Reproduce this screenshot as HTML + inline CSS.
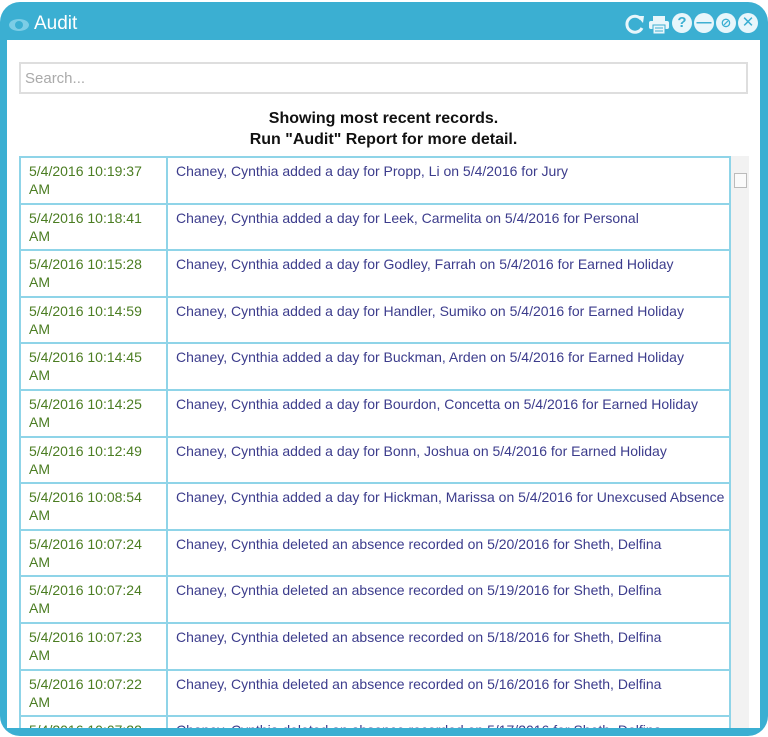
<!DOCTYPE html>
<html><head><meta charset="utf-8"><style>
*{box-sizing:border-box;margin:0;padding:0}
body{width:768px;height:737px;background:#fff;overflow:hidden;font-family:"Liberation Sans","DejaVu Sans",sans-serif;position:relative}
.win{position:absolute;left:0;top:2px;width:768px;height:734px;background:#3bafd2;border-radius:20px}
.title{position:absolute;left:34px;top:11px;color:#fff;font-size:19px;}
.eye{position:absolute;left:9px;top:17px;width:20px;height:12px;border-radius:50%;background:#7ccde6}
.eye:after{content:"";position:absolute;left:6px;top:2px;width:8px;height:8px;border-radius:50%;background:#3bafd2}
.content{position:absolute;left:7px;top:38px;width:753px;height:688px;background:#fff;overflow:hidden}
.search{position:absolute;left:12px;top:22px;width:729px;height:32px;border:2px solid #dedede;color:#aaa;font-size:15px;padding:6px 4px}
.head{position:absolute;left:0;width:753px;top:68px;text-align:center;font-weight:bold;font-size:16px;line-height:21px;color:#111}
.tbl{position:absolute;left:12px;top:116px;width:712px;height:600px;border-top:2px solid #8fd4e8;border-left:2px solid #8fd4e8;border-right:2px solid #8fd4e8}
.row{position:absolute;left:0;width:708px;height:46.6px;border-bottom:2px solid #8fd4e8;font-size:14px;line-height:18px}
.d{position:absolute;left:8px;top:4px;width:130px;color:#4b7d22}
.t{position:absolute;left:155px;top:4px;color:#3c3c8c;white-space:nowrap}
.vl{position:absolute;left:145px;top:0;width:2px;height:600px;background:#8fd4e8}
.sb{position:absolute;left:724px;top:116px;width:18px;height:572px;background:#f2f2f2}
.thumb{position:absolute;left:727px;top:133px;width:13px;height:15px;border:1px solid #bbb;background:#fafafa}
.icons{position:absolute;right:10px;top:11px;display:flex;gap:2px}
.c{width:20px;height:20px;border-radius:50%;background:#e8f6fb;color:#3bafd2;font-weight:bold;font-size:15px;text-align:center;line-height:20px}
</style></head><body>
<div class="win">
<div class="eye"></div><div class="title">Audit</div>
<div class="icons">
<svg width="22" height="22" viewBox="0 0 22 22"><path d="M17 6 A8 8 0 1 0 18 15" fill="none" stroke="#e8f6fb" stroke-width="3"/><path d="M13 3 L20 3 L19 10 Z" fill="#e8f6fb"/></svg>
<svg width="22" height="22" viewBox="0 0 22 22"><rect x="5" y="3" width="12" height="5" fill="#e8f6fb"/><rect x="1" y="8" width="20" height="8" rx="2" fill="#e8f6fb"/><rect x="5" y="12" width="12" height="9" fill="#e8f6fb" stroke="#3bafd2"/><path d="M7 15h8M7 18h8" stroke="#3bafd2"/></svg>
<div class="c">?</div><div class="c">—</div><div class="c" style="font-size:13px">⊘</div><div class="c">✕</div>
</div>
<div class="content">
<div class="search">Search...</div>
<div class="head">Showing most recent records.<br>Run "Audit" Report for more detail.</div>
<div class="tbl">
<div class="row" style="top:0"><div class="d">5/4/2016 10:19:37 AM</div><div class="t">Chaney, Cynthia added a day for Propp, Li on 5/4/2016 for Jury</div></div>
<div class="row" style="top:46.6px"><div class="d">5/4/2016 10:18:41 AM</div><div class="t">Chaney, Cynthia added a day for Leek, Carmelita on 5/4/2016 for Personal</div></div>
<div class="row" style="top:93.2px"><div class="d">5/4/2016 10:15:28 AM</div><div class="t">Chaney, Cynthia added a day for Godley, Farrah on 5/4/2016 for Earned Holiday</div></div>
<div class="row" style="top:139.8px"><div class="d">5/4/2016 10:14:59 AM</div><div class="t">Chaney, Cynthia added a day for Handler, Sumiko on 5/4/2016 for Earned Holiday</div></div>
<div class="row" style="top:186.4px"><div class="d">5/4/2016 10:14:45 AM</div><div class="t">Chaney, Cynthia added a day for Buckman, Arden on 5/4/2016 for Earned Holiday</div></div>
<div class="row" style="top:233px"><div class="d">5/4/2016 10:14:25 AM</div><div class="t">Chaney, Cynthia added a day for Bourdon, Concetta on 5/4/2016 for Earned Holiday</div></div>
<div class="row" style="top:279.6px"><div class="d">5/4/2016 10:12:49 AM</div><div class="t">Chaney, Cynthia added a day for Bonn, Joshua on 5/4/2016 for Earned Holiday</div></div>
<div class="row" style="top:326.2px"><div class="d">5/4/2016 10:08:54 AM</div><div class="t">Chaney, Cynthia added a day for Hickman, Marissa on 5/4/2016 for Unexcused Absence</div></div>
<div class="row" style="top:372.8px"><div class="d">5/4/2016 10:07:24 AM</div><div class="t">Chaney, Cynthia deleted an absence recorded on 5/20/2016 for Sheth, Delfina</div></div>
<div class="row" style="top:419.4px"><div class="d">5/4/2016 10:07:24 AM</div><div class="t">Chaney, Cynthia deleted an absence recorded on 5/19/2016 for Sheth, Delfina</div></div>
<div class="row" style="top:466px"><div class="d">5/4/2016 10:07:23 AM</div><div class="t">Chaney, Cynthia deleted an absence recorded on 5/18/2016 for Sheth, Delfina</div></div>
<div class="row" style="top:512.6px"><div class="d">5/4/2016 10:07:22 AM</div><div class="t">Chaney, Cynthia deleted an absence recorded on 5/16/2016 for Sheth, Delfina</div></div>
<div class="row" style="top:559.2px"><div class="d">5/4/2016 10:07:22 AM</div><div class="t">Chaney, Cynthia deleted an absence recorded on 5/17/2016 for Sheth, Delfina</div></div>
<div class="vl"></div>
</div>
<div class="sb"></div><div class="thumb"></div>
</div>
</div>
</body></html>
